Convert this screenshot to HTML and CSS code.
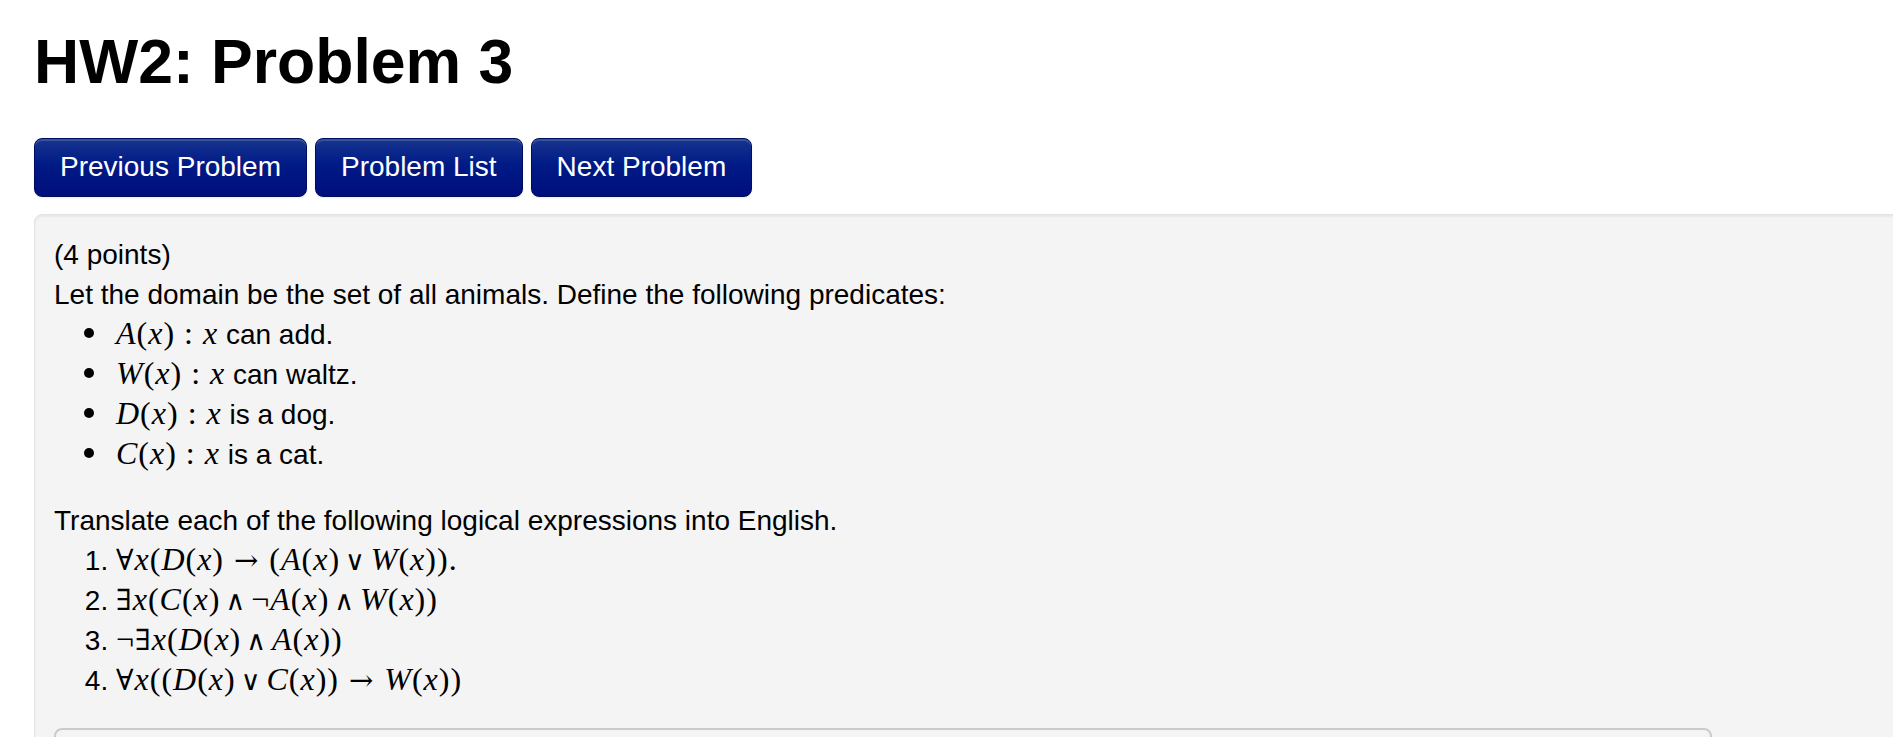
FILE: index.html
```html
<!DOCTYPE html>
<html lang="en">
<head>
    <meta charset="UTF-8">
    <meta name="viewport" content="width=device-width, initial-scale=1.0">
    <title>HW2: Problem 3</title>
    <link rel="stylesheet" href="styles.css">
</head>
<body>
    <div class="page">
        <h1 class="problem-title">HW2: Problem 3</h1>

        <div class="nav">
            <a class="btn" href="#">Previous Problem</a>
            <a class="btn" href="#">Problem List</a>
            <a class="btn" href="#">Next Problem</a>
        </div>

        <div class="well">
            <div>(4 points)</div>
            <div>Let the domain be the set of all animals. Define the following predicates:</div>
            <ul class="defs">
                <li><span class="math"><i>A</i>(<i>x</i>)<span class="rel">:</span><i>x</i></span> can add.</li>
                <li><span class="math"><i>W</i>(<i>x</i>)<span class="rel">:</span><i>x</i></span> can waltz.</li>
                <li><span class="math"><i>D</i>(<i>x</i>)<span class="rel">:</span><i>x</i></span> is a dog.</li>
                <li><span class="math"><i>C</i>(<i>x</i>)<span class="rel">:</span><i>x</i></span> is a cat.</li>
            </ul>

            <div class="par">Translate each of the following logical expressions into English.</div>
            <ol class="exprs">
                <li><span class="math"><span class="op">&forall;</span><i>x</i>(<i>D</i>(<i>x</i>)<span class="arrow">&rarr;</span>(<i>A</i>(<i>x</i>)<span class="bin">&or;</span><i>W</i>(<i>x</i>)).</span></li>
                <li><span class="math"><span class="op">&exist;</span><i>x</i>(<i>C</i>(<i>x</i>)<span class="bin">&and;</span>&not;<i>A</i>(<i>x</i>)<span class="bin">&and;</span><i>W</i>(<i>x</i>))</span></li>
                <li><span class="math">&not;<span class="op">&exist;</span><i>x</i>(<i>D</i>(<i>x</i>)<span class="bin">&and;</span><i>A</i>(<i>x</i>))</span></li>
                <li><span class="math"><span class="op">&forall;</span><i>x</i>((<i>D</i>(<i>x</i>)<span class="bin">&or;</span><i>C</i>(<i>x</i>))<span class="arrow">&rarr;</span><i>W</i>(<i>x</i>))</span></li>
            </ol>

            <div class="answer-box"></div>
        </div>
    </div>
</body>
</html>
```

FILE: styles.css
```css
* {
    margin: 0;
    padding: 0;
    box-sizing: border-box;
}

body {
    font-family: "Liberation Sans", Arial, Helvetica, sans-serif;
    font-size: 28px;
    line-height: 40px;
    color: #000;
    background: #fff;
    overflow: hidden;
}

.page {
    padding: 27px 0 0 34px;
}

.problem-title {
    font-size: 62.5px;
    line-height: 68px;
    font-weight: bold;
}

/* navigation buttons */
.nav {
    display: flex;
    gap: 8px;
    margin-top: 43px;
}
.btn {
    display: block;
    padding: 8px 25px 9px;
    font-size: 28px;
    line-height: 40px;
    color: #fff;
    text-decoration: none;
    background: linear-gradient(#17358f, #001a86 45%, #000f7c);
    border: 1px solid #000c5e;
    border-radius: 8px;
    box-shadow: inset 0 2px 0 rgba(255, 255, 255, 0.15), 0 1px 2px rgba(0, 0, 0, 0.08);
}

/* problem body */
.well {
    margin-top: 17px;
    margin-right: -60px;
    padding: 20px 19px 19px;
    background: #f4f4f4;
    border: 1px solid #e3e3e3;
    border-radius: 8px;
    box-shadow: inset 0 2px 2px rgba(0, 0, 0, 0.05);
}

.defs,
.exprs {
    padding-left: 62px;
}
.defs {
    list-style: none;
}
.defs li::before {
    content: "";
    display: inline-block;
    width: 10px;
    height: 10px;
    margin: 0 22px 0 -32px;
    border-radius: 50%;
    background: #000;
    vertical-align: 6px;
}

.par {
    margin-top: 26px;
}

.math {
    font-family: "Liberation Serif", "DejaVu Serif", serif;
    font-size: 32px;
    line-height: 1;
    letter-spacing: 1px;
}
.math i {
    font-style: italic;
}
.math .op {
    font-family: "DejaVu Serif", serif;
    font-size: 29px;
}
.math .rel {
    margin: 0 9px;
}
.math .arrow {
    margin: 0 10px;
    font-family: "DejaVu Serif", serif;
    font-size: 29px;
}
.math .bin {
    margin: 0 5px;
    font-family: "DejaVu Serif", serif;
    font-size: 27px;
}

.answer-box {
    margin-top: 27px;
    width: 1658px;
    height: 60px;
    border: 2px solid #cbcbcb;
    border-radius: 8px;
}
```
